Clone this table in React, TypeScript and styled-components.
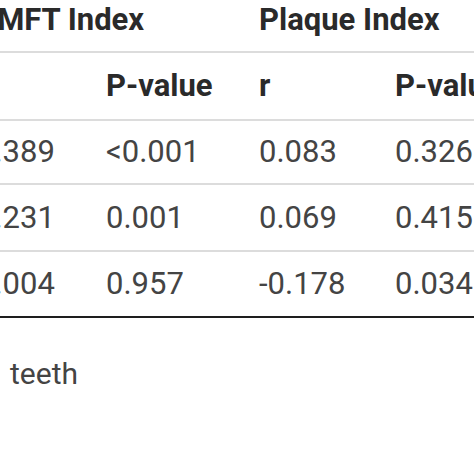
import React from "react";
import styled, {createGlobalStyle} from "styled-components";

const GlobalStyle = createGlobalStyle`
  html, body {
    margin: 0;
    padding: 0;
    background: #fff;
    overflow: hidden;
  }
  body {
    width: 474px;
    height: 474px;
    font-family: Roboto, "Liberation Sans", sans-serif;
  }
`;

const Page = styled.div`
  width: 474px;
  height: 474px;
  overflow: hidden;
`;

const Table = styled.table`
  border-collapse: collapse;
  margin-left: -23px;
  table-layout: fixed;
  width: 640px;
  font-size: 31px;
  line-height: 36px;
`;

const Col = styled.col<{ $w: number }>`
  width: ${p => p.$w}px;
`;

const HeadRow = styled.tr<{ $h: number; $top: number }>`
  border-bottom: 2px solid #dcdcdc;
  th {
    height: ${p => p.$h}px;
    padding-top: ${p => p.$top}px;
  }
`;

const HeadCell = styled.th`
  text-align: left;
  font-weight: 700;
  color: #2a2a2a;
  padding: 0;
  vertical-align: top;
  white-space: nowrap;
  box-sizing: border-box;
`;

const BodyRow = styled.tr<{ $h: number; $last?: boolean }>`
  border-bottom: 2px solid ${p => (p.$last ? "#1e1e1e" : "#dcdcdc")};
  td {
    height: ${p => p.$h}px;
  }
`;

const Cell = styled.td`
  padding: 0;
  color: #444;
  vertical-align: middle;
  white-space: nowrap;
`;

const Footnote = styled.p`
  margin: 38px 0 0 10px;
  font-size: 30px;
  line-height: 36px;
  color: #444;
`;

const rows = [
    {h: 62, values: ["0.389", "<0.001", "0.083", "0.326"]},
    {h: 65, values: ["0.231", "0.001", "0.069", "0.415"]},
    {h: 64, values: ["0.004", "0.957", "-0.178", "0.034"]},
];

const App = () => {
    return (
        <Page>
            <GlobalStyle/>
            <Table>
                <colgroup>
                    <Col $w={129}/>
                    <Col $w={153}/>
                    <Col $w={136}/>
                    <Col $w={222}/>
                </colgroup>
                <thead>
                    <HeadRow $h={52} $top={2}>
                        <HeadCell colSpan={2}>DMFT Index</HeadCell>
                        <HeadCell colSpan={2}>Plaque Index</HeadCell>
                    </HeadRow>
                    <HeadRow $h={68} $top={15}>
                        <HeadCell>r</HeadCell>
                        <HeadCell>P-value</HeadCell>
                        <HeadCell>r</HeadCell>
                        <HeadCell>P-value</HeadCell>
                    </HeadRow>
                </thead>
                <tbody>
                    {rows.map((row, i) => (
                        <BodyRow key={i} $h={row.h} $last={i === rows.length - 1}>
                            {row.values.map((v, j) => <Cell key={j}>{v}</Cell>)}
                        </BodyRow>
                    ))}
                </tbody>
            </Table>
            <Footnote>teeth</Footnote>
        </Page>
    );
};

export default App;
